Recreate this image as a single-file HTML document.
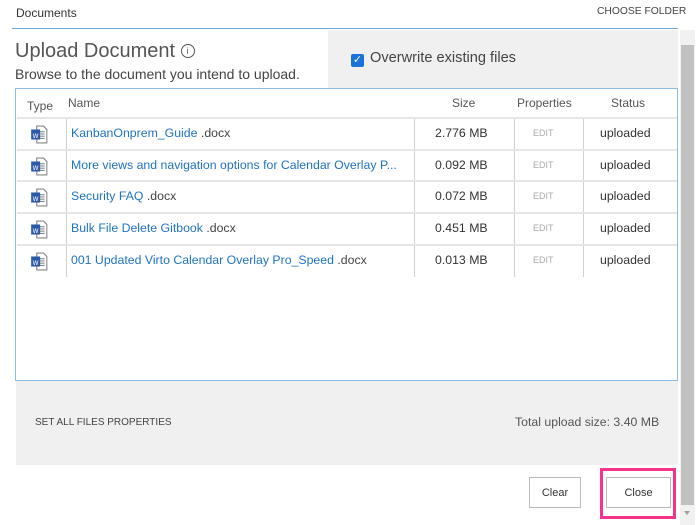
<!DOCTYPE html>
<html><head><style>
body{margin:0;width:700px;height:525px;background:#fff;font-family:"Liberation Sans",sans-serif;position:relative;overflow:hidden;color:#333}
.a{position:absolute}
.t{font-size:12px;white-space:nowrap}
.row{position:absolute;left:17px;width:660px;height:31px;border-top:2px solid #e6e6e6}
.cell{position:absolute;top:7px;font-size:12.3px;white-space:nowrap}
.vl{position:absolute;top:0;bottom:0;width:1px;background:#d0d0d0}
.ic{position:absolute;left:13px;top:6px;width:18px;height:19px}
</style></head><body>
<div class="a t" style="left:16px;top:6px;color:#333">Documents</div>
<div class="a t" style="left:597px;top:6px;font-size:10.3px;color:#444">CHOOSE FOLDER</div>
<div class="a" style="left:12px;top:28px;width:666px;height:1px;background:#6aa6d8"></div>
<div class="a" style="left:328px;top:30px;width:350px;height:58px;background:#f0f0f0"></div>
<div class="a" style="left:15px;top:40px;font-size:20px;color:#555">Upload Document <span style="display:inline-block;width:12px;height:12px;border:1.3px solid #555;border-radius:50%;text-align:center;line-height:12px;font-size:9px;vertical-align:3px">i</span></div>
<div class="a" style="left:15px;top:66px;font-size:14px;color:#444">Browse to the document you intend to upload.</div>
<div class="a" style="left:351px;top:54px;width:13px;height:13px;background:#1a73d9;border-radius:2px;color:#fff;font-size:11px;line-height:13px;text-align:center">✓</div>
<div class="a" style="left:370px;top:50px;font-size:14.6px;color:#444">Overwrite existing files</div>
<div class="a" style="left:15px;top:88px;width:661px;height:291px;border:1px solid #8cbde6;background:#fff"></div>
<div class="a t" style="left:27px;top:99px;color:#555">Type</div>
<div class="a t" style="left:68px;top:96px;color:#555">Name</div>
<div class="a t" style="left:452px;top:96px;color:#555">Size</div>
<div class="a t" style="left:517px;top:96px;color:#555">Properties</div>
<div class="a t" style="left:611px;top:96px;color:#555">Status</div>
<div id="rows"></div>
<script>
var d=[["KanbanOnprem_Guide"," .docx","2.776 MB"],["More views and navigation options for Calendar Overlay P...","","0.092 MB"],["Security FAQ"," .docx","0.072 MB"],["Bulk File Delete Gitbook"," .docx","0.451 MB"],["001 Updated Virto Calendar Overlay Pro_Speed"," .docx","0.013 MB"]];
var h="";d.forEach(function(r,i){var y=117+i*31.7;
h+='<div class="row" style="top:'+y+'px"><div class="vl" style="left:49px"></div><div class="vl" style="left:397px"></div><div class="vl" style="left:497px"></div><div class="vl" style="left:566px"></div>'+
'<svg class="ic" viewBox="0 0 16 17"><path d="M6 1h6l3 3v12H6z" fill="#fff" stroke="#888"/><path d="M8 6h5M8 8h5M8 10h5M8 12h5" stroke="#888"/><rect x="1" y="4" width="8" height="9" fill="#2b5aa8"/><text x="5" y="11.5" font-size="7" fill="#fff" text-anchor="middle" font-family="Liberation Sans">w</text></svg>'+
'<div class="cell" style="left:54px;color:#1f73c4">'+r[0]+'<span style="color:#444">'+r[1]+'</span></div>'+
'<div class="cell" style="left:418px;color:#333">'+r[2]+'</div><div class="cell" style="left:516px;font-size:9px;top:9px;color:#aaa">EDIT</div><div class="cell" style="left:583px;color:#333">uploaded</div></div>';});
document.getElementById("rows").innerHTML=h;
</script>
<div class="a" style="left:16px;top:381px;width:662px;height:84px;background:#f0f0f0"></div>
<div class="a" style="left:35px;top:417px;font-size:10px;color:#444">SET ALL FILES PROPERTIES</div>
<div class="a t" style="left:515px;top:415px;font-size:12.3px;color:#555">Total upload size: 3.40 MB</div>
<div class="a" style="left:529px;top:477px;width:50px;height:29px;border:1px solid #bbb;background:#fff;font-size:11px;text-align:center;line-height:31px;color:#333">Clear</div>
<div class="a" style="left:600px;top:468px;width:70px;height:45px;border:3px solid #f4338f"></div>
<div class="a" style="left:606px;top:477px;width:63px;height:29px;border:1px solid #bbb;background:#fff;font-size:11px;text-align:center;line-height:31px;color:#333">Close</div>
<div class="a" style="left:680px;top:30px;width:15px;height:495px;background:#f1f1f1"></div>
<div class="a" style="left:681px;top:45px;width:13px;height:460px;background:#c1c1c1"></div>
<div class="a" style="left:684px;top:511px;width:0;height:0;border-left:3px solid transparent;border-right:3px solid transparent;border-top:4px solid #a0a0a0"></div>
</body></html>
